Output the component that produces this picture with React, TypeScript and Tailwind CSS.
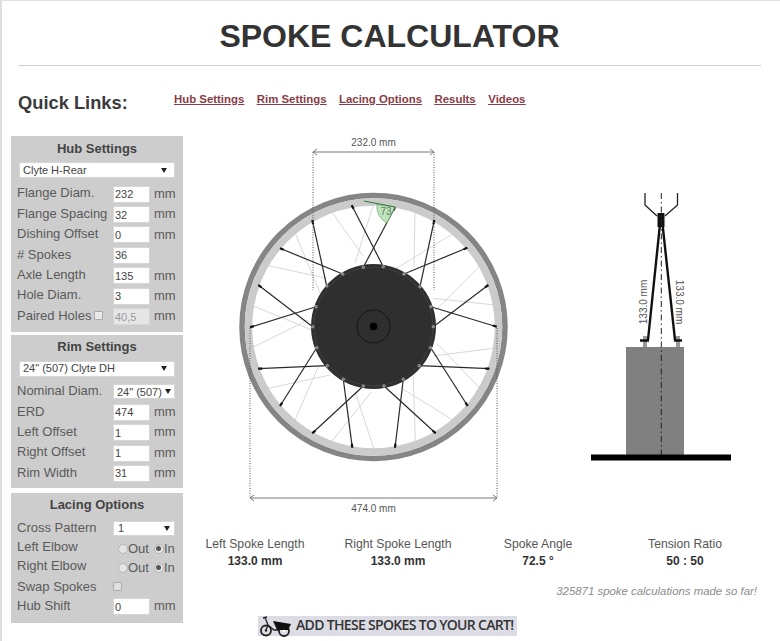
import React from "react";

const darkSpokes: number[][] = [
  [312.3,220,326.7,286],[351.7,205.3,383.3,266.7],[395,207.3,363.3,267.3],[434.3,220,420,286.7],
  [280,248.3,342.7,274],[467.3,247.7,404,274],[258.3,285,312.7,326.7],[488.3,285,433.3,326.7],
  [250,327.3,316,306.7],[496.7,326.7,431,306.7],[258.3,368.7,327.3,365.7],[489.3,368.7,419.3,365.7],
  [280,406,316.7,347.7],[467.7,406,430.7,347.7],[312.3,433.3,363.3,386],[435.7,433.3,384,386],
  [352.3,447.7,343.3,379.3],[395,447.7,403.3,379.3],
];
const lightSpokes: number[][] = [
  [331.7,211.7,363,256],[373.3,205,355,263],[415,211.7,414,267],[453.3,233.3,396.7,268.3],
  [480,266,436,310],[495,305,433,298.3],[295,232.7,320,293],[268.3,265.7,326.7,278.3],
  [252.7,305.7,311.7,330],[252.7,347.3,308,320],[493.3,348.3,433,356],[480,388.3,436.7,343.3],
  [452.7,420,401.7,388.3],[415.3,441.7,413.3,376.7],[374,449.3,355,391.7],[331,442.3,371.7,391.7],
  [295,420,318.3,366.7],[268.3,388.3,330,375],
];

function WheelDiagram() {
  return (
    <svg width={280} height={389} viewBox="235 136 280 389" className="shrink-0 block">
      {lightSpokes.map((s, i) => (
        <line key={i} x1={s[0]} y1={s[1]} x2={s[2]} y2={s[3]} stroke="#d8d8d8" strokeWidth={1} />
      ))}
      <circle cx={373.5} cy={327} r={131.5} fill="none" stroke="#858585" strokeWidth={5.5} />
      <circle cx={373.5} cy={327} r={125} fill="none" stroke="#cbcbcb" strokeWidth={7.5} />
      {darkSpokes.map((s, i) => {
        const dx = s[2] - s[0];
        const dy = s[3] - s[1];
        const l = Math.hypot(dx, dy);
        return (
          <g key={i}>
            <line x1={s[0]} y1={s[1]} x2={s[2]} y2={s[3]} stroke="#2a2a2a" strokeWidth={1.2} />
            <line x1={s[0]} y1={s[1]} x2={s[0] + (dx / l) * 4} y2={s[1] + (dy / l) * 4} stroke="#111" strokeWidth={2.2} />
          </g>
        );
      })}
      <circle cx={373.5} cy={326.5} r={62.5} fill="#2f2f2f" />
      <circle cx={373.5} cy={326.5} r={59.5} fill="none" stroke="#444" strokeWidth={0.8} />
      {darkSpokes.map((s, i) => (
        <circle key={i} cx={s[2]} cy={s[3]} r={1.3} fill="#777" stroke="#bbb" strokeWidth={0.6} />
      ))}
      <circle cx={373.5} cy={326.5} r={16.5} fill="none" stroke="#111" strokeWidth={0.9} />
      <circle cx={373.5} cy={326.5} r={3.8} fill="#000" />

      <path d="M395 207 L377 204.5 A18 18 0 0 0 387 223 Z" fill="#bfe3bd" stroke="#5b9a5b" strokeWidth={0.6} />
      <line x1={364} y1={201} x2={395} y2={207} stroke="#2f7a33" strokeWidth={1} />
      <text x={386} y={215} fontSize={10} fill="#5f7f60" textAnchor="middle" fontFamily="Liberation Sans, sans-serif">73</text>

      <line x1={313} y1={152} x2={313} y2={290} stroke="#555" strokeWidth={1} strokeDasharray="1 1.5" />
      <line x1={434} y1={152} x2={434} y2={290} stroke="#555" strokeWidth={1} strokeDasharray="1 1.5" />
      <path d="M317 149 L313 152 L317 155 M313 152 H434 M430 149 L434 152 L430 155" fill="none" stroke="#777" strokeWidth={1} />
      <text x={373.5} y={145.5} fontSize={10} fill="#555" textAnchor="middle" fontFamily="Liberation Sans, sans-serif">232.0 mm</text>

      <line x1={250} y1={328} x2={250} y2={498} stroke="#555" strokeWidth={1} strokeDasharray="1 1.5" />
      <line x1={497} y1={328} x2={497} y2={498} stroke="#555" strokeWidth={1} strokeDasharray="1 1.5" />
      <path d="M254 495 L250 498 L254 501 M250 498 H497 M493 495 L497 498 L493 501" fill="none" stroke="#777" strokeWidth={1} />
      <text x={373.5} y={511.5} fontSize={10} fill="#555" textAnchor="middle" fontFamily="Liberation Sans, sans-serif">474.0 mm</text>
    </svg>
  );
}

function SideDiagram() {
  return (
    <svg width={160} height={389} viewBox="580 136 160 389" className="shrink-0 block">
      <rect x={626} y={347} width={58} height={108} fill="#808080" />
      <rect x={643} y={336} width={4} height={11} fill="#999" />
      <rect x={676} y={336} width={4} height={11} fill="#999" />
      <rect x={591} y={454.5} width={140} height={6} fill="#000" />
      <path d="M645 193 V205 L657 216 M677.5 193 V205 L665 216" fill="none" stroke="#222" strokeWidth={1.3} />
      <rect x={657.5} y={213} width={7} height={14} fill="#111" />
      <path d="M660 224 L648 340 M662.5 224 L675 340" fill="none" stroke="#111" strokeWidth={2.4} />
      <path d="M640 340.5 H649 M674 340.5 H682" stroke="#111" strokeWidth={2.6} fill="none" />
      <line x1={661.3} y1={193} x2={661.3} y2={455} stroke="#222" strokeWidth={1} strokeDasharray="6 3 1.5 3" />
      <text transform="translate(646.5 302) rotate(-90)" fontSize={10} fill="#555" textAnchor="middle" fontFamily="Liberation Sans, sans-serif">133.0 mm</text>
      <text transform="translate(675.5 302) rotate(90)" fontSize={10} fill="#555" textAnchor="middle" fontFamily="Liberation Sans, sans-serif">133.0 mm</text>
    </svg>
  );
}

function Arrow() {
  return (
    <svg width={6} height={5} viewBox="0 0 6 5" className="shrink-0">
      <path d="M0 0 H6 L3 5 Z" fill="#222" />
    </svg>
  );
}

function Label({ text, w = "w-[96px]" }: { text: string; w?: string }) {
  return <span className={`${w} shrink-0 pb-[2px] text-[13px] text-[#5a5a5a] whitespace-nowrap`}>{text}</span>;
}

function Row({ label, value, unit = true, disabled = false, h = "h-[20.4px]" }: { label: string; value: string; unit?: boolean; disabled?: boolean; h?: string }) {
  return (
    <div className={`flex items-center pl-[6px] ${h}`}>
      <Label text={label} />
      <input
        readOnly
        value={value}
        className={`w-[37px] h-[17px] border border-[#d6d6d6] px-[1px] text-[11px] outline-none ${disabled ? "bg-[#e6e6e6] text-[#999]" : "bg-white text-[#444]"}`}
      />
      {unit && <span className="ml-[4px] pb-[1px] text-[13px] text-[#5a5a5a]">mm</span>}
    </div>
  );
}

function PanelSelect({ text }: { text: string }) {
  return (
    <div className="mx-[8px] h-[16px] bg-white border border-[#d6d6d6] flex items-center justify-between pl-[3px] pr-[7px] text-[11px] text-[#444]">
      <span>{text}</span>
      <Arrow />
    </div>
  );
}

function Heading({ text }: { text: string }) {
  return <div className="h-[23px] pt-[2px] flex items-center justify-center text-[13px] font-bold text-[#444]">{text}</div>;
}

function Radio({ on }: { on?: boolean }) {
  return (
    <span className="w-[10px] h-[10px] rounded-full border border-[#b5b5b5] bg-[#e4e4e4] flex items-center justify-center">
      {on && <span className="w-[5px] h-[5px] rounded-full bg-[#555]" />}
    </span>
  );
}

function ElbowRow({ label, h }: { label: string; h: string }) {
  return (
    <div className={`flex items-center pl-[6px] ${h}`}>
      <Label text={label} w="w-[101px]" />
      <span className="flex items-center text-[13px] text-[#5a5a5a] mt-[2px]">
        <Radio />
        <span>Out</span>
        <span className="w-[5px]" />
        <Radio on />
        <span>In</span>
      </span>
    </div>
  );
}

function Cart() {
  return (
    <svg width={34} height={22} viewBox="0 0 34 22" className="shrink-0">
      <circle cx={8} cy={15.5} r={5} fill="none" stroke="#222" strokeWidth={1.8} />
      <circle cx={8} cy={15.5} r={1.2} fill="#222" />
      <circle cx={26} cy={16} r={5} fill="none" stroke="#222" strokeWidth={1.8} />
      <circle cx={26} cy={16} r={1.2} fill="#fff" />
      <path d="M5 3 L9 2 M7 2.5 L10 10 L8 15 M10 10 L16 15 H21" fill="none" stroke="#222" strokeWidth={1.3} />
      <path d="M15 6 L33 9 L30 15 H19 Z" fill="#111" />
    </svg>
  );
}

function Stat({ label, value, w }: { label: string; value: string; w: string }) {
  return (
    <div className={`${w} text-center leading-[17px]`}>
      <div className="text-[12.2px] text-[#555]">{label}</div>
      <div className="text-[12px] font-bold text-[#333]">{value}</div>
    </div>
  );
}

export default function App() {
  return (
    <div className="w-[780px] h-[641px] overflow-hidden bg-white border-l-2 border-t border-[#dedede] font-['Liberation_Sans',Arial,sans-serif]">
      <h1 className="h-[65px] mx-[16px] w-[743px] border-b border-[#cfcfcf] pt-[16px] text-center text-[32px] leading-[38px] font-bold text-[#333]">
        SPOKE CALCULATOR
      </h1>
      <div className="h-[70px] ml-[16px] flex">
        <div className="w-[156px] pt-[26px] text-[18.3px] leading-[22px] font-bold text-[#3a3a3a]">Quick Links:</div>
        <nav className="flex gap-[12.6px] pt-[26px] text-[11.4px] leading-[14px] font-bold text-[#8a3c46] underline">
          <a>Hub Settings</a>
          <a>Rim Settings</a>
          <a>Lacing Options</a>
          <a>Results</a>
          <a>Videos</a>
        </nav>
      </div>
      <div className="flex">
        <aside className="w-[172px] ml-[9px] shrink-0 flex flex-col">
          <section className="bg-[#cdcdcd] pb-[5px]">
            <Heading text="Hub Settings" />
            <div className="h-[3px]" />
            <PanelSelect text="Clyte H-Rear" />
            <div className="h-[6px]" />
            <Row label="Flange Diam." value="232" />
            <Row label="Flange Spacing" value="32" />
            <Row label="Dishing Offset" value="0" />
            <Row label="# Spokes" value="36" unit={false} />
            <Row label="Axle Length" value="135" />
            <Row label="Hole Diam." value="3" />
            <div className="relative">
              <Row label="Paired Holes" value="40,5" disabled />
              <span className="absolute left-[83px] top-[5px] w-[9px] h-[9px] border border-[#aaa] bg-[#e8e8e8] rounded-[1px]" />
            </div>
          </section>
          <section className="bg-[#cdcdcd] mt-[3px] pb-[4px]">
            <Heading text="Rim Settings" />
            <div className="h-[3px]" />
            <PanelSelect text={'24" (507) Clyte DH'} />
            <div className="h-[5px]" />
            <div className="flex items-center pl-[6px] h-[20.4px]">
              <Label text="Nominal Diam." />
              <div className="w-[62px] h-[15px] bg-white border border-[#d6d6d6] flex items-center justify-between pl-[3px] pr-[3px] text-[11px] text-[#444]">
                <span>24" (507)</span>
                <Arrow />
              </div>
            </div>
            <Row label="ERD" value="474" />
            <Row label="Left Offset" value="1" />
            <Row label="Right Offset" value="1" />
            <Row label="Rim Width" value="31" />
          </section>
          <section className="bg-[#cdcdcd] mt-[5px] pb-[6px]">
            <Heading text="Lacing Options" />
            <div className="h-[3px]" />
            <div className="flex items-center pl-[6px] h-[20px]">
              <Label text="Cross Pattern" />
              <div className="w-[62px] h-[15px] bg-white border border-[#d6d6d6] flex items-center justify-between pl-[4px] pr-[4px] text-[11px] text-[#444]">
                <span>1</span>
                <Arrow />
              </div>
            </div>
            <ElbowRow label="Left Elbow" h="h-[18px]" />
            <ElbowRow label="Right Elbow" h="h-[20px]" />
            <div className="flex items-center pl-[6px] h-[20px]">
              <span className="w-[96px] shrink-0 text-[13px] text-[#5a5a5a] whitespace-nowrap">Swap Spokes</span>
              <span className="w-[9px] h-[9px] border border-[#aaa] bg-[#e0e0e0] rounded-[1px]" />
            </div>
            <Row label="Hub Shift" value="0" h="h-[20px]" />
          </section>
        </aside>
        <main className="flex-1">
          <div className="flex h-[389px]">
            <div className="ml-[52px]">
              <WheelDiagram />
            </div>
            <div className="ml-[65px]">
              <SideDiagram />
            </div>
          </div>
          <div className="flex pt-[11px]">
            <Stat label="Left Spoke Length" value="133.0 mm" w="w-[144px]" />
            <Stat label="Right Spoke Length" value="133.0 mm" w="w-[142px]" />
            <Stat label="Spoke Angle" value="72.5 °" w="w-[138px]" />
            <Stat label="Tension Ratio" value="50 : 50" w="w-[156px]" />
          </div>
          <div className="mt-[13px] h-[16px] w-[574px] text-right text-[11.4px] leading-[16px] italic text-[#8c8c8c]">
            325871 spoke calculations made so far!
          </div>
          <button className="mt-[17px] ml-[75px] w-[259px] h-[20px] bg-[#dcdce4] flex items-center text-[14px] font-semibold text-[#333] font-['Open_Sans',sans-serif] tracking-[-0.68px] whitespace-nowrap">
            <Cart />
            <span className="ml-[4px] pb-[3px]">ADD THESE SPOKES TO YOUR CART!</span>
          </button>
        </main>
      </div>
    </div>
  );
}
